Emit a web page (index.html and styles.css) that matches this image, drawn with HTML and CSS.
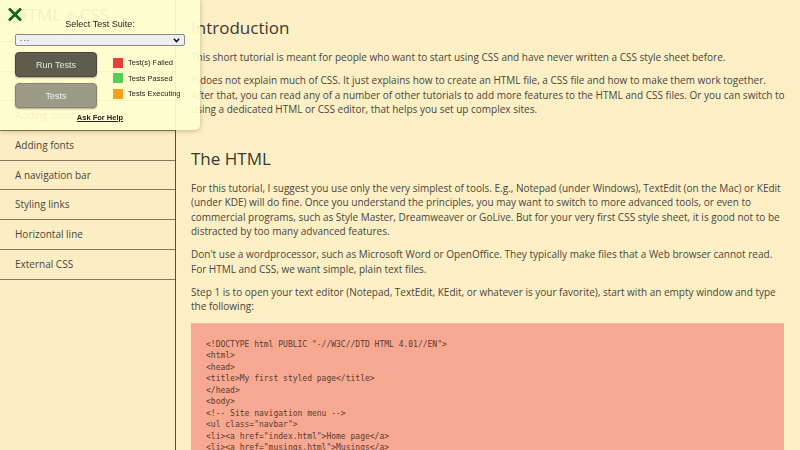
FILE: index.html
```html
<!DOCTYPE html>
<html>
<head>
<meta charset="utf-8">
<title>HTML + CSS Tutorial</title>
<link rel="stylesheet" href="styles.css">
</head>
<body>
<div class="page">
  <aside class="sidebar">
    <div class="site-title">HTML + CSS Tutorial</div>
    <ul class="nav">
      <li>Introduction</li>
      <li>The HTML</li>
      <li>Adding color</li>
      <li>Adding fonts</li>
      <li>A navigation bar</li>
      <li>Styling links</li>
      <li>Horizontal line</li>
      <li>External CSS</li>
    </ul>
  </aside>
  <main class="content">
    <h2 class="first">Introduction</h2>
    <p>This short tutorial is meant for people who want to start using CSS and have never written a CSS style sheet before.</p>
    <p>It does not explain much of CSS. It just explains how to create an HTML file, a CSS file and how to make them work together. After that, you can read any of a number of other tutorials to add more features to the HTML and CSS files. Or you can switch to using a dedicated HTML or CSS editor, that helps you set up complex sites.</p>
    <h2>The HTML</h2>
    <p>For this tutorial, I suggest you use only the very simplest of tools. E.g., Notepad (under Windows), TextEdit (on the Mac) or KEdit (under KDE) will do fine. Once you understand the principles, you may want to switch to more advanced tools, or even to commercial programs, such as Style Master, Dreamweaver or GoLive. But for your very first CSS style sheet, it is good not to be distracted by too many advanced features.</p>
    <p>Don't use a wordprocessor, such as Microsoft Word or OpenOffice. They typically make files that a Web browser cannot read. For HTML and CSS, we want simple, plain text files.</p>
    <p>Step 1 is to open your text editor (Notepad, TextEdit, KEdit, or whatever is your favorite), start with an empty window and type the following:</p>
<pre class="code">&lt;!DOCTYPE html PUBLIC "-//W3C//DTD HTML 4.01//EN"&gt;
&lt;html&gt;
&lt;head&gt;
&lt;title&gt;My first styled page&lt;/title&gt;
&lt;/head&gt;
&lt;body&gt;
&lt;!-- Site navigation menu --&gt;
&lt;ul class="navbar"&gt;
&lt;li&gt;&lt;a href="index.html"&gt;Home page&lt;/a&gt;
&lt;li&gt;&lt;a href="musings.html"&gt;Musings&lt;/a&gt;
&lt;li&gt;&lt;a href="town.html"&gt;My town&lt;/a&gt;
&lt;li&gt;&lt;a href="links.html"&gt;Links&lt;/a&gt;
&lt;/ul&gt;</pre>
  </main>
</div>

<div class="test-panel">
  <svg class="close" width="14" height="13" viewBox="0 0 14 13">
    <path d="M2 1.5 L12 11.5 M12 1.5 L2 11.5" stroke="#0b6a12" stroke-width="2.8" stroke-linecap="square"/>
  </svg>
  <div class="suite-label">Select Test Suite:</div>
  <div class="select">
    <span class="select-text">- - -</span>
    <svg class="chev" width="7" height="5" viewBox="0 0 7 5"><path d="M0.8 0.8 L3.5 3.6 L6.2 0.8" fill="none" stroke="#111" stroke-width="1.5"/></svg>
  </div>
  <div class="panel-row">
    <div class="buttons">
      <div class="btn btn-run">Run Tests</div>
      <div class="btn btn-tests">Tests</div>
    </div>
    <ul class="legend">
      <li><span class="sw sw-red"></span>Test(s) Failed</li>
      <li><span class="sw sw-green"></span>Tests Passed</li>
      <li><span class="sw sw-orange"></span>Tests Executing</li>
    </ul>
  </div>
  <div class="help">Ask For Help</div>
</div>
</body>
</html>
```

FILE: styles.css
```css
html, body {
  margin: 0;
  padding: 0;
  height: 100%;
  overflow: hidden;
}
body {
  background: #fdefc4;
  font-family: "Open Sans", "Noto Sans", sans-serif;
  color: #4a4540;
}
.page {
  display: flex;
  height: 450px;
}
.sidebar {
  width: 175px;
  flex: none;
  border-right: 1px solid #5c4c33;
  background: #fcedc2;
}
.site-title {
  height: 42px;
  border-bottom: 1px solid #8a7a5c;
  padding: 3px 15px 0;
  box-sizing: border-box;
  font-size: 17px;
  line-height: 24px;
  color: #4a4540;
}
.nav {
  list-style: none;
  margin: 0;
  padding: 0;
}
.nav li {
  height: 29.7px;
  box-sizing: border-box;
  border-bottom: 1px solid #8a7a5c;
  padding: 0 15px;
  font-size: 10px;
  line-height: 29px;
  color: #4a4540;
}
.content {
  flex: 1;
  padding: 16px 16px 0 15px;
  min-width: 0;
}
h2 {
  font-weight: 400;
  font-size: 17px;
  line-height: 24px;
  margin: 30px 0 10px;
  color: #3b3733;
}
h2.first {
  margin-top: 0;
}
p {
  font-size: 10px;
  line-height: 14.5px;
  margin: 0 -4px 8.5px 0;
}
.code {
  margin: 9px 0 0;
  background: #f6a990;
  border-top: 1px solid #f4b79a;
  padding: 15px 15px;
  font-family: "DejaVu Sans Mono", monospace;
  font-size: 8px;
  line-height: 11.5px;
  color: #5a3a30;
}

/* test panel overlay */
.test-panel {
  position: fixed;
  top: 0;
  left: 0;
  width: 200px;
  height: 130px;
  box-sizing: border-box;
  padding: 7px 15px 0;
  background: rgba(255, 255, 208, 0.92);
  border-bottom-right-radius: 5px;
  box-shadow: 0 1px 5px rgba(90, 70, 30, 0.35);
  font-family: "Liberation Sans", Arial, sans-serif;
  color: #222;
}
.close {
  position: absolute;
  top: 8px;
  left: 8px;
}
.suite-label {
  text-align: center;
  font-size: 9px;
  line-height: 12px;
  margin: 11px 0 4px;
}
.select {
  height: 10px;
  border: 1px solid #8a8a8a;
  border-radius: 2px;
  background: #efefef;
  display: flex;
  align-items: center;
  justify-content: space-between;
  padding: 0 4px;
  font-size: 6px;
  color: #333;
}
.chev { display: block; }
.panel-row {
  display: flex;
  margin-top: 6px;
}
.buttons {
  display: flex;
  flex-direction: column;
  gap: 6px;
  width: 82px;
  flex: none;
}
.btn {
  height: 25px;
  border-radius: 4px;
  box-sizing: border-box;
  text-align: center;
  line-height: 24px;
  font-size: 9px;
  box-shadow: 0 1px 2px rgba(0, 0, 0, 0.35);
}
.btn-run {
  background: #5e5c4d;
  color: #e6e6e0;
  border: 1px solid #4a483c;
}
.btn-tests {
  background: #9c9b88;
  color: #f2f2ea;
  border: 1px solid #86856f;
}
.legend {
  list-style: none;
  margin: 3px 0 0 16px;
  padding: 0;
  font-size: 7.5px;
  flex: none;
  white-space: nowrap;
}
.legend li {
  display: flex;
  align-items: center;
  height: 15.5px;
}
.sw {
  width: 10px;
  height: 10px;
  margin-right: 5px;
  flex: none;
}
.sw-red { background: #f03c3c; }
.sw-green { background: #55cf55; }
.sw-orange { background: #f6a11e; }
.help {
  text-align: center;
  font-size: 7.5px;
  font-weight: 700;
  text-decoration: underline;
  margin-top: 5px;
  color: #222;
}
```
